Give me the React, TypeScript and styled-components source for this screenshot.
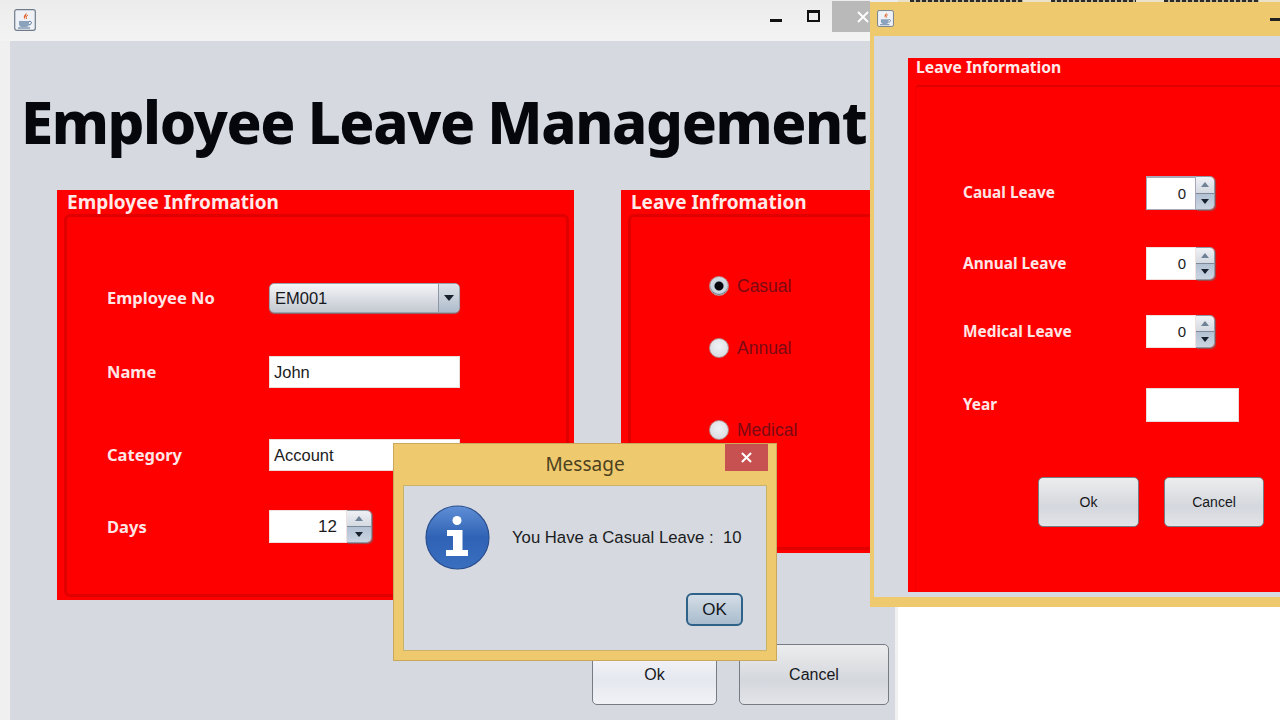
import styled, { createGlobalStyle } from "styled-components";

const Global = createGlobalStyle`
  html, body { margin: 0; padding: 0; background: #fff; }
  * { box-sizing: border-box; }
`;

const Desktop = styled.div`
  position: relative;
  width: 1280px;
  height: 720px;
  overflow: hidden;
  background: #fff;
  font-family: "Liberation Sans", Arial, sans-serif;
`;

const BackStrip = styled.div`
  position: absolute;
  left: 880px;
  top: 0;
  width: 400px;
  height: 2px;
  display: flex;
  gap: 28px;
  padding-left: 30px;
  background: #e9e2c8;
`;

const BackText = styled.span<{ $w: number }>`
  width: ${(p) => p.$w}px;
  background: repeating-linear-gradient(90deg, #2a2a2a 0 4px, #b9b49c 4px 6px);
`;

const MainWindow = styled.div`
  position: absolute;
  left: 0;
  top: 0;
  width: 898px;
  height: 720px;
  background: #f0f0f0;
  display: flex;
  flex-direction: column;
`;

const TitleBar = styled.div`
  height: 41px;
  flex: none;
  display: flex;
  align-items: flex-start;
  padding: 9px 0 0 14px;
  background: linear-gradient(#ececec, #f3f3f3);
`;

const WinButtons = styled.div`
  margin-left: auto;
  display: flex;
  align-items: flex-start;
  margin-top: -9px;
`;

const MinGlyph = styled.div`
  width: 12px;
  height: 3px;
  background: #111;
  margin: 19px 25px 0 0;
`;

const MaxGlyph = styled.div`
  width: 13px;
  height: 12px;
  border: 2px solid #111;
  border-top-width: 3px;
  margin: 10px 12px 0 0;
`;

const CloseBox = styled.div`
  width: 38px;
  height: 31px;
  margin-top: 1px;
  margin-right: 28px;
  background: #b9b9b9;
  padding: 10px 0 0 25px;
`;

const MainClient = styled.div`
  flex: 1;
  margin: 0 3px 0 10px;
  background: #d6d9e0;
  padding: 0 0 0 47px;
  display: flex;
  flex-direction: column;
`;

const Heading = styled.h1`
  margin: 46px 0 0 -36px;
  height: 70px;
  font: 800 58px/70px "Noto Sans", Tahoma, sans-serif;
  letter-spacing: -1.4px;
  color: #05070c;
  white-space: nowrap;
`;

const PanelRow = styled.div`
  display: flex;
  align-items: flex-start;
  gap: 47px;
  margin-top: 33px;
`;

const Panel = styled.section<{ $w: number; $h: number }>`
  width: ${(p) => p.$w}px;
  height: ${(p) => p.$h}px;
  flex: none;
  background: #ff0000;
  padding: 0 5px 3px 7px;
  display: flex;
  flex-direction: column;
`;

const Legend = styled.div<{ $size?: number; $h?: number; $lh?: number; $left?: number }>`
  height: ${(p) => p.$h ?? 24}px;
  flex: none;
  padding-left: ${(p) => p.$left ?? 3}px;
  font: bold ${(p) => p.$size ?? 19}px/${(p) => p.$lh ?? 24}px "Noto Sans", Tahoma, sans-serif;
  color: #ffeaea;
  white-space: nowrap;
`;

const Inset = styled.div<{ $pad: string }>`
  flex: 1;
  border: 3px solid #e00000;
  border-radius: 6px;
  padding: ${(p) => p.$pad};
  display: flex;
  flex-direction: column;
`;

const FormRow = styled.div<{ $top: number; $col: number; $h: number }>`
  display: grid;
  grid-template-columns: ${(p) => p.$col}px 1fr;
  align-items: center;
  height: ${(p) => p.$h}px;
  margin-top: ${(p) => p.$top}px;
`;

const Label = styled.label<{ $size?: number }>`
  font: bold ${(p) => p.$size ?? 16.5}px/20px "Noto Sans", Tahoma, sans-serif;
  color: #ffe6e6;
  white-space: nowrap;
`;

const Combo = styled.div`
  width: 191px;
  height: 30px;
  display: flex;
  border: 1px solid #9aa3ad;
  border-radius: 5px;
  overflow: hidden;
  background: linear-gradient(#f5f6f8, #d9dce2 55%, #c3c8d0);
  font-size: 16.5px;
  line-height: 28px;
  color: #16181c;
  box-shadow: 0 1px 1px #8a6a6a;
`;

const ComboText = styled.span`
  flex: 1;
  padding-left: 5px;
`;

const ComboArrow = styled.span`
  width: 21px;
  display: flex;
  align-items: center;
  justify-content: center;
  border-left: 1px solid #8e97a3;
  background: linear-gradient(#dfe4ea, #aebbcb);
`;

const Tri = styled.i<{ $up?: boolean; $pale?: boolean; $w?: number }>`
  display: block;
  width: 0;
  height: 0;
  border-left: ${(p) => p.$w ?? 4}px solid transparent;
  border-right: ${(p) => p.$w ?? 4}px solid transparent;
  ${(p) => (p.$up ? "border-bottom" : "border-top")}: ${(p) => (p.$w ?? 4) + 1}px solid
    ${(p) => (p.$pale ? "#6f8296" : "#17202c")};
`;

const TextField = styled.div<{ $w: number; $h?: number; $right?: boolean }>`
  width: ${(p) => p.$w}px;
  height: ${(p) => p.$h ?? 32}px;
  background: #fff;
  border: 1px solid #eadada;
  padding: 0 4px;
  font-size: 16.5px;
  line-height: ${(p) => (p.$h ?? 32) - 2}px;
  color: #1c1c1c;
  text-align: ${(p) => (p.$right ? "right" : "left")};
`;

const SpinnerBox = styled.div`
  display: flex;
  align-items: stretch;
`;

const SpinField = styled.div<{ $w: number; $h: number; $size: number; $focus?: boolean }>`
  width: ${(p) => p.$w}px;
  height: ${(p) => p.$h}px;
  background: #fff;
  border: 1px solid ${(p) => (p.$focus ? "#a8a8b8" : "#f0e0e0")};
  border-top-width: ${(p) => (p.$focus ? 2 : 1)}px;
  padding-right: 9px;
  text-align: right;
  font-size: ${(p) => p.$size}px;
  line-height: ${(p) => p.$h - 2}px;
  color: #1c1c1c;
`;

const SpinButtons = styled.div<{ $w: number }>`
  width: ${(p) => p.$w}px;
  display: flex;
  flex-direction: column;
  border-radius: 0 5px 5px 0;
  overflow: hidden;
  border: 1px solid #8f99a6;
  border-left: none;
  box-shadow: 1px 1px 1px #9a4a4a;
`;

const SpinHalf = styled.div<{ $low?: boolean }>`
  flex: 1;
  display: flex;
  align-items: center;
  justify-content: center;
  background: ${(p) =>
    p.$low ? "linear-gradient(#b2c1d4, #cbd5e1)" : "linear-gradient(#eef0f4, #d5dae2)"};
  border-top: ${(p) => (p.$low ? "1px solid #7e8a98" : "none")};
`;

const RadioList = styled.div`
  display: flex;
  flex-direction: column;
`;

const RadioRow = styled.div<{ $top: number }>`
  display: flex;
  align-items: center;
  gap: 8px;
  height: 20px;
  margin-top: ${(p) => p.$top}px;
  font-size: 17.5px;
  color: #7a0a14;
`;

const RadioDot = styled.span<{ $on?: boolean }>`
  width: 20px;
  height: 20px;
  border-radius: 50%;
  flex: none;
  display: flex;
  align-items: center;
  justify-content: center;
  border: 1px solid #b88a8a;
  background: ${(p) =>
    p.$on
      ? "radial-gradient(circle, #05070c 0 4px, #c9d4de 5px, #dfe5ea 100%)"
      : "radial-gradient(circle at 50% 40%, #f0f2f5, #d3d8df)"};
  box-shadow: ${(p) => (p.$on ? "inset 0 -1px 1px #5a7286" : "none")};
`;

const ButtonRow = styled.div<{ $top: number; $left: number; $gap: number }>`
  display: flex;
  gap: ${(p) => p.$gap}px;
  margin-top: ${(p) => p.$top}px;
  margin-left: ${(p) => p.$left}px;
`;

const SwingButton = styled.button<{ $w: number; $h: number; $size: number; $light?: boolean }>`
  width: ${(p) => p.$w}px;
  height: ${(p) => p.$h}px;
  padding: 0;
  border: 1px solid #777c84;
  border-radius: 5px;
  background: ${(p) =>
    p.$light
      ? "linear-gradient(#f8f9fb, #e6e8f0 60%, #f0f2f6)"
      : "linear-gradient(#eceded, #d4d7dd 60%, #e2e4e8)"};
  font: ${(p) => p.$size}px "Liberation Sans", Arial, sans-serif;
  color: #16181c;
`;

const SideWindow = styled.div`
  position: absolute;
  left: 870px;
  top: 2px;
  width: 410px;
  height: 605px;
  background: #efc96e;
  display: flex;
  flex-direction: column;
  padding: 0 0 10px 4px;
`;

const GoldBar = styled.div`
  height: 34px;
  flex: none;
  display: flex;
  align-items: flex-start;
  padding: 8px 0 0 3px;
`;

const SideMin = styled.div`
  width: 10px;
  height: 3px;
  background: #222;
  margin: 8px 0 0 auto;
`;

const SideClient = styled.div`
  flex: 1;
  background: #d6d9e0;
  padding: 22px 0 5px 34px;
  display: flex;
`;

const SidePanel = styled.section`
  flex: 1;
  background: #ff0000;
  display: flex;
  flex-direction: column;
  padding: 0 0 0 7px;
`;

const SideInset = styled.div`
  flex: 1;
  border-top: 2px solid #e00000;
  border-left: 1px solid #f00000;
  border-radius: 4px 0 0 0;
  padding-left: 47px;
  display: flex;
  flex-direction: column;
`;

const Dialog = styled.div`
  position: absolute;
  left: 393px;
  top: 443px;
  width: 384px;
  height: 218px;
  background: #efc96e;
  border: 1px solid #c9a85e;
  display: flex;
  flex-direction: column;
  padding: 0 9px 9px;
`;

const DialogHead = styled.div`
  height: 41px;
  flex: none;
  position: relative;
  text-align: center;
  font: 19px/41px "Noto Sans", "Segoe UI", sans-serif;
  color: #4c4220;
`;

const DialogClose = styled.div`
  position: absolute;
  right: -1px;
  top: 0;
  width: 43px;
  height: 27px;
  background: #c75050;
  display: flex;
  align-items: center;
  justify-content: center;
`;

const DialogBody = styled.div`
  flex: 1;
  background: #d6d9e0;
  border: 1px solid #c9b26a;
  padding: 19px 23px 0 21px;
  display: flex;
  flex-direction: column;
`;

const MessageRow = styled.div`
  display: flex;
  align-items: center;
  gap: 22px;
  font-size: 16.7px;
  color: #1a1c20;
  white-space: pre;
`;

const OkButton = styled.button`
  align-self: flex-end;
  width: 57px;
  height: 33px;
  margin-top: 23px;
  padding: 0;
  border: 2px solid #2f6288;
  border-radius: 6px;
  background: linear-gradient(#d3dde6, #a9bccd);
  font: 17px "Liberation Sans", Arial, sans-serif;
  color: #14181c;
`;

function JavaIcon({ size }: { size: number }) {
  return (
    <svg width={size} height={size} viewBox="0 0 22 22">
      <rect x="0.7" y="0.7" width="20.6" height="20.6" rx="2" fill="#eef1f5" stroke="#6f7c8c" strokeWidth="1.2" />
      <path d="M12 3c1 2-3 3-2 6 .3 1 1 1.500 1 1.500-1.500-2 3-3.500 1-7.500z" fill="#e2622a" />
      <path d="M14 6c-2 1-2 2.500-1.500 4" fill="none" stroke="#e2622a" strokeWidth="1" />
      <path d="M5 12h10v3a3 3 0 0 1-3 3H8a3 3 0 0 1-3-3z" fill="#8ba2bd" />
      <path d="M15 12.500c3-.8 3.500 2.500 0 3.500" fill="none" stroke="#4f6f94" strokeWidth="1" />
      <path d="M4 19h12" stroke="#4f6f94" strokeWidth="1" />
    </svg>
  );
}

function CloseGlyph({ size, weight }: { size: number; weight: number }) {
  return (
    <svg width={size} height={size} viewBox="0 0 12 12" style={{ display: "block" }}>
      <path d="M1 1l10 10M11 1L1 11" stroke="#fff" strokeWidth={weight} fill="none" />
    </svg>
  );
}

function InfoIcon() {
  return (
    <svg width="65" height="65" viewBox="0 0 65 65" style={{ flex: "none" }}>
      <defs>
        <linearGradient id="infoBlue" x1="0" y1="0" x2="0" y2="1">
          <stop offset="0" stopColor="#5f8fd6" />
          <stop offset="0.5" stopColor="#2f62b4" />
          <stop offset="1" stopColor="#3a6fc0" />
        </linearGradient>
      </defs>
      <circle cx="32.5" cy="32.5" r="31.5" fill="url(#infoBlue)" stroke="#2a4f8f" strokeWidth="1.2" />
      <circle cx="32" cy="15.500" r="4.500" fill="#fff" />
      <path d="M22 25h15.500v20h5.500v6H21v-6h7V31h-6z" fill="#fff" />
    </svg>
  );
}

function Spinner({ value, w, btn, h, size, focus }: { value: number; w: number; btn: number; h: number; size: number; focus?: boolean }) {
  return (
    <SpinnerBox>
      <SpinField $w={w} $h={h} $size={size} $focus={focus}>{value}</SpinField>
      <SpinButtons $w={btn}>
        <SpinHalf><Tri $up $pale /></SpinHalf>
        <SpinHalf $low><Tri /></SpinHalf>
      </SpinButtons>
    </SpinnerBox>
  );
}

export default function App() {
  return (
    <Desktop>
      <Global />
      <BackStrip>
        <BackText $w={113} />
        <BackText $w={85} />
        <BackText $w={95} />
      </BackStrip>
      <MainWindow>
        <TitleBar>
          <JavaIcon size={22} />
          <WinButtons>
            <MinGlyph />
            <MaxGlyph />
            <CloseBox><CloseGlyph size={12} weight={1.8} /></CloseBox>
          </WinButtons>
        </TitleBar>
        <MainClient>
          <Heading>Employee Leave Management</Heading>
          <PanelRow>
            <Panel $w={517} $h={410}>
              <Legend>Employee Infromation</Legend>
              <Inset $pad="0 0 0 40px">
                <FormRow $top={66} $col={162} $h={30}>
                  <Label>Employee No</Label>
                  <Combo>
                    <ComboText>EM001</ComboText>
                    <ComboArrow><Tri $w={5} /></ComboArrow>
                  </Combo>
                </FormRow>
                <FormRow $top={43} $col={162} $h={32}>
                  <Label>Name</Label>
                  <TextField $w={191}>John</TextField>
                </FormRow>
                <FormRow $top={51} $col={162} $h={32}>
                  <Label>Category</Label>
                  <TextField $w={191}>Account</TextField>
                </FormRow>
                <FormRow $top={39} $col={162} $h={33}>
                  <Label>Days</Label>
                  <Spinner value={12} w={78} btn={25} h={33} size={17} />
                </FormRow>
              </Inset>
            </Panel>
            <Panel $w={270} $h={363}>
              <Legend>Leave Infromation</Legend>
              <Inset $pad="0 0 0 78px">
                <RadioList>
                  <RadioRow $top={59}><RadioDot $on />Casual</RadioRow>
                  <RadioRow $top={42}><RadioDot />Annual</RadioRow>
                  <RadioRow $top={62}><RadioDot />Medical</RadioRow>
                </RadioList>
              </Inset>
            </Panel>
          </PanelRow>
          <ButtonRow $top={44} $left={535} $gap={22}>
            <SwingButton $w={125} $h={61} $size={16} $light>Ok</SwingButton>
            <SwingButton $w={150} $h={61} $size={16}>Cancel</SwingButton>
          </ButtonRow>
        </MainClient>
      </MainWindow>

      <SideWindow>
        <GoldBar>
          <JavaIcon size={17} />
          <SideMin />
        </GoldBar>
        <SideClient>
          <SidePanel>
            <Legend $size={15.7} $h={27} $lh={19} $left={1}>Leave Information</Legend>
            <SideInset>
              <FormRow $top={89} $col={183} $h={34}>
                <Label $size={15.4}>Caual Leave</Label>
                <Spinner value={0} w={50} btn={19} h={34} size={15} focus />
              </FormRow>
              <FormRow $top={37} $col={183} $h={33}>
                <Label $size={15.4}>Annual Leave</Label>
                <Spinner value={0} w={50} btn={19} h={33} size={15} />
              </FormRow>
              <FormRow $top={35} $col={183} $h={33}>
                <Label $size={15.4}>Medical Leave</Label>
                <Spinner value={0} w={50} btn={19} h={33} size={15} />
              </FormRow>
              <FormRow $top={40} $col={183} $h={34}>
                <Label $size={15.4}>Year</Label>
                <TextField $w={93} $h={34} />
              </FormRow>
              <ButtonRow $top={55} $left={75} $gap={25}>
                <SwingButton $w={101} $h={50} $size={14}>Ok</SwingButton>
                <SwingButton $w={100} $h={50} $size={14}>Cancel</SwingButton>
              </ButtonRow>
            </SideInset>
          </SidePanel>
        </SideClient>
      </SideWindow>

      <Dialog>
        <DialogHead>
          Message
          <DialogClose><CloseGlyph size={11} weight={2.2} /></DialogClose>
        </DialogHead>
        <DialogBody>
          <MessageRow>
            <InfoIcon />
            You Have a Casual Leave :  10
          </MessageRow>
          <OkButton>OK</OkButton>
        </DialogBody>
      </Dialog>
    </Desktop>
  );
}
